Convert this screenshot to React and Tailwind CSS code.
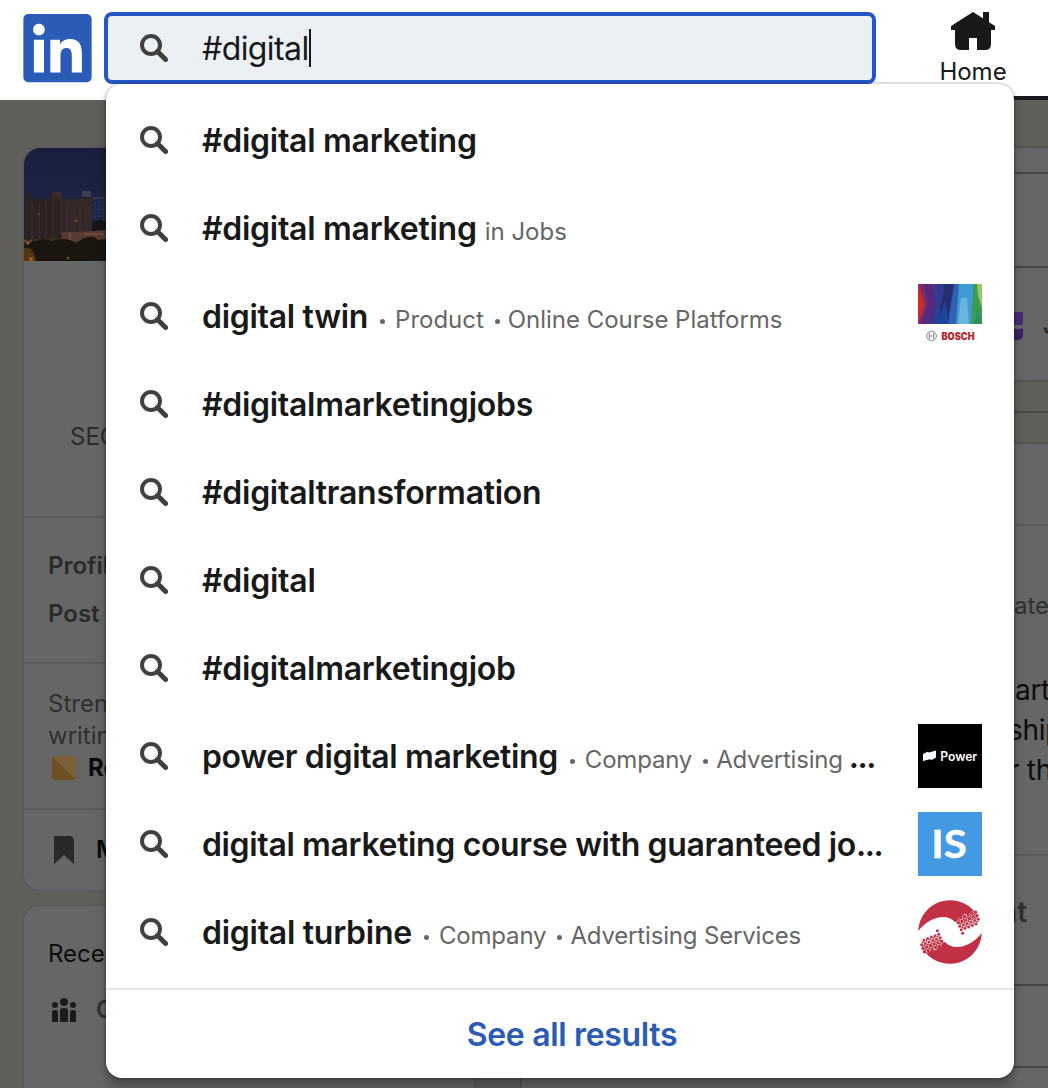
import React, { useState } from 'react'
import { FaLinkedin } from 'react-icons/fa'

const SearchIcon = () => (
  <svg className="w-7 h-7 shrink-0" viewBox="0 0 28 28" fill="none" stroke="#404040">
    <circle cx="11" cy="11" r="9" strokeWidth="4" />
    <path d="M17.5 17.5L25.6 25.6" strokeWidth="5" strokeLinecap="round" />
  </svg>
)

const HomeIcon = () => (
  <svg className="w-11 h-[38px]" viewBox="0 0 44 38" fill="#191919">
    <path d="M22 0L32 6.3V0H38V10.2L44 14V18H40V32Q40 38 34 38H26V26H18V38H10Q4 38 4 32V18H0V14Z" />
  </svg>
)

const BoschLogo = () => (
  <svg className="w-16 h-16" viewBox="0 0 64 64">
    <rect width="64" height="40" fill="#2b2a6b" />
    <path d="M0 0H18L13 40H0Z" fill="#7b2b6c" />
    <path d="M0 0L7 20L0 40Z" fill="#cf2a2a" />
    <path d="M6 0H14L19 18L12 40H3L10 20Z" fill="#542a80" />
    <path d="M16 0H28L22 24L24 40H12L18 22Z" fill="#2f3c94" />
    <path d="M25 0H37L34 20L30 40H20L28 20Z" fill="#26306f" />
    <path d="M20 40L27 16L31 40Z" fill="#17479e" />
    <path d="M36 0H42V40H30Z" fill="#2f62b5" />
    <path d="M41 0H56L54 40H38Z" fill="#3f9bd3" />
    <path d="M40 40L43 14H49L51 40Z" fill="#6cb4dc" />
    <path d="M56 0H64V40H53Z" fill="#3a9d50" />
    <path d="M59 0H64V24L60 12Z" fill="#9dc464" />
    <path d="M56 40L60 24L64 40Z" fill="#2f8f5a" />
    <g fill="none" stroke="#8b9095">
      <circle cx="13.5" cy="52" r="4.9" strokeWidth="1" />
      <path d="M11.3 48.5V55.5M15.7 48.5V55.5M11.3 52H15.7" strokeWidth="1.2" />
    </g>
    <text x="23.5" y="55.7" textLength="33" lengthAdjust="spacingAndGlyphs" className="font-['Inter',sans-serif] font-black text-[10px]" fill="#b8242b">BOSCH</text>
  </svg>
)

const PowerLogo = () => (
  <svg className="w-16 h-16" viewBox="0 0 64 64">
    <rect width="64" height="64" fill="#000" />
    <path d="M5 30L9.5 27.8L11 28.6L18 26.6V33.6L13.5 36L12 35.2L5 37Z" fill="#fff" />
    <text x="22.2" y="36.6" textLength="37" lengthAdjust="spacingAndGlyphs" className="font-['Inter',sans-serif] font-semibold text-[12.5px]" fill="#fff">Power</text>
  </svg>
)

const InternshalaLogo = () => (
  <svg className="w-16 h-16" viewBox="0 0 64 64">
    <rect width="64" height="64" fill="#4499e3" />
    <text x="13.2" y="45.6" textLength="35.6" lengthAdjust="spacingAndGlyphs" className="font-['Lato',sans-serif] font-bold text-[38.5px]" fill="#fff" stroke="#fff" strokeWidth="0.4">IS</text>
  </svg>
)

// halftone corner, the other one is the same turned by 180deg
const dots = []
for (let r = 0; r < 5; r++) {
  for (let c = 0; c < 6; c++) {
    const x = 39 + c * 3.7 + r * 1.4
    const y = 19.2 - c * 1.4 + r * 3.5
    if (x > 63 || (r === 3 && c > 4) || (r === 4 && (c < 0 || c > 0))) continue
    dots.push([x, y, r < 2 ? 1.75 : 1.5])
    if (r < 3 && c < 5) dots.push([x + 2.6, y + 1.1, 1])
  }
}

const TurbineHalf = () => (
  <>
    <path d="M0.2 31A32 32 0 0 1 57 12L54 11.5L50 14.5L46 14L43 17.5L39.5 18L39 21.5L37 22C29 13 12 16 0.2 31Z" fill="#c13044" />
    {dots.map(([x, y, r], i) => <circle key={i} cx={x} cy={y} r={r} fill="#c13044" />)}
  </>
)

const TurbineLogo = () => (
  <svg className="w-16 h-16" viewBox="0 0 64 64">
    <TurbineHalf />
    <g transform="rotate(180 32 32)">
      <TurbineHalf />
    </g>
  </svg>
)

const CityPhoto = () => (
  <svg className="block w-[450px] h-[113px]" viewBox="0 0 450 113">
    <defs>
      <linearGradient id="sky" x1="0" y1="0" x2="0" y2="1">
        <stop offset="0" stopColor="#191f3d" />
        <stop offset="1" stopColor="#20284e" />
      </linearGradient>
    </defs>
    <rect width="450" height="113" fill="url(#sky)" />
    <path d="M2 51V45H8V51H24V46H28V44H38V51H58V43H67V51H82V113H0V51Z" fill="#292126" />
    <rect x="58" y="43" width="9" height="6" fill="#3a3f56" />
    <rect x="28" y="44" width="10" height="7" fill="#382a2d" />
    <rect x="2" y="51" width="34" height="44" fill="#2d2222" />
    <rect x="36" y="51" width="32" height="36" fill="#35272a" />
    <rect x="68" y="51" width="14" height="24" fill="#1e2646" />
    <path d="M8 53V92M15 53V92M22 53V92M29 53V92M43 53V84M50 53V84M56 53V84M62 53V84" stroke="#3b2b29" strokeWidth="1.5" />
    <path d="M68 50H82" stroke="#4d4a4c" strokeWidth="1" />
    <path d="M71 54V72M75 53V72M79 53V72" stroke="#2a345a" strokeWidth="2" strokeDasharray="2 1.5" />
    <path d="M68 76Q74 68 82 74V86H68Z" fill="#15141b" />
    <path d="M38 84H54L70 83L82 82V96H36Z" fill="#573a31" />
    <path d="M46 84V95M60 86H80" stroke="#7a5040" strokeWidth="1.5" />
    <path d="M0 93H36" stroke="#634423" strokeWidth="3" strokeDasharray="3 2" />
    <path d="M0 113V98Q16 88 28 93Q42 88 52 95Q66 84 74 92L82 91V113Z" fill="#19160f" />
    <path d="M0 100Q10 98 12 113H0Z" fill="#543411" />
    <circle cx="7" cy="111" r="2" fill="#a0601b" />
    <circle cx="4" cy="95" r="1.5" fill="#9a7140" />
    <circle cx="52" cy="73" r="1" fill="#916539" />
    <circle cx="15" cy="66" r="1" fill="#6d4c37" />
    <circle cx="44" cy="110" r="1.5" fill="#7a3f14" />
  </svg>
)

const results = [
  { title: '#digital marketing', track: 'tracking-[-0.28px]' },
  { title: '#digital marketing', track: 'tracking-[-0.28px]', suffix: 'in Jobs' },
  { title: 'digital twin', track: 'tracking-[-0.3px]', meta: ['Product', 'Online Course Platforms'], metaTrack: 'tracking-[-0.02px]', logo: <BoschLogo /> },
  { title: '#digitalmarketingjobs', track: 'tracking-[-0.3px]' },
  { title: '#digitaltransformation', track: 'tracking-[-0.27px]' },
  { title: '#digital', track: 'tracking-[-0.25px]' },
  { title: '#digitalmarketingjob', track: 'tracking-[-0.3px]' },
  { title: 'power digital marketing', track: 'tracking-[-0.36px]', meta: ['Company', 'Advertising'], metaTrack: 'tracking-[-0.2px]', more: true, logo: <PowerLogo /> },
  { title: 'digital marketing course with guaranteed jo', track: 'tracking-[-0.36px]', cut: true, logo: <InternshalaLogo /> },
  { title: 'digital turbine', track: 'tracking-[-0.27px]', meta: ['Company', 'Advertising Services'], metaTrack: 'tracking-[-0.17px]', logo: <TurbineLogo /> },
]

const ResultRow = ({ item }) => (
  <li className="flex items-center h-22 pl-[34px] pr-8 cursor-pointer">
    <SearchIcon />
    <div className="flex-1 flex items-baseline ml-[34px] pt-0.5 whitespace-nowrap">
      <span className={`text-[32px] leading-10 font-semibold text-[#191919] ${item.track}`}>
        {item.title}
        {item.cut && <span className="tracking-[-1.4px]">...</span>}
      </span>
      {item.suffix && <span className="ml-2 text-2xl text-[#666]">{item.suffix}</span>}
      {item.meta && item.meta.map((m, i) => (
        <span key={m} className={`flex items-baseline text-2xl text-[#666] ${item.metaTrack}`}>
          <span className={`w-[5px] h-[5px] relative top-px self-center rounded-full bg-[#666] ${i === 0 ? 'ml-3 mr-2.5' : 'ml-[11px] mr-2'}`}></span>
          {m}
        </span>
      ))}
      {item.more && <span className="ml-1.5 text-[32px] leading-10 font-semibold tracking-[-1.4px] text-[#191919]">...</span>}
    </div>
    {item.logo}
  </li>
)

const Header = ({ query }) => (
  <header className="flex items-start h-25 bg-white pl-[23px] pt-3">
    <FaLinkedin className="w-[69px] h-[78px] shrink-0 -mt-[3px] text-[#2a5bb7]" />
    <label className="flex items-center w-[772px] h-18 shrink-0 ml-3 pl-8 rounded-lg border-4 border-[#2655c4] bg-[#ebf0f5]">
      <SearchIcon />
      <span className="ml-[34px] pt-0.5 text-[32px] text-[#191919] tracking-[-0.6px]">{query}</span>
      <span className="w-0.5 h-[38px] bg-[#191919]"></span>
    </label>
    <nav className="flex flex-col items-center w-[194px] shrink-0">
      <HomeIcon />
      <span className="mt-1.5 text-2xl leading-8 text-[#191919]">Home</span>
    </nav>
  </header>
)

const LeftColumn = () => (
  <aside className="w-[454px] shrink-0 pt-[46px] text-2xl whitespace-nowrap">
    <div className="border-2 border-[#5b5b5b] rounded-[18px] overflow-hidden bg-[#666]">
      <CityPhoto />
      <div className="h-[255px] pt-[160px] pl-[46px] text-[#2b2b2b]">SEO</div>
      <div className="h-[146px] border-t-2 border-[#5a5a5a] pt-6 pl-6 font-semibold text-[#2b2b2b]">
        <p className="leading-12">Profile</p>
        <p className="leading-12">Post</p>
      </div>
      <div className="h-[146px] border-t-2 border-[#5a5a5a] pt-6 pl-6 text-[#303030]">
        <p className="leading-8">Strengthen</p>
        <p className="leading-8">writing</p>
        <div className="flex items-center gap-3 pl-1 leading-8">
          <svg className="w-6 h-6" viewBox="0 0 24 24">
            <rect width="24" height="24" rx="4" fill="#6f5022" />
            <path d="M2 2L22 22Q24 21 24 19V4Q24 0 20 0H4Q2 0 2 2Z" fill="#7c6138" />
          </svg>
          <span className="font-bold text-[#0a0a0a]">Re</span>
        </div>
      </div>
      <div className="flex items-center h-[82px] border-t-2 border-[#5a5a5a] pl-[30px]">
        <svg className="w-5 h-7" viewBox="0 0 20 28" fill="#292929">
          <path d="M0 0H15Q20 0 20 5V28L10 19L0 28Z" />
        </svg>
        <span className="ml-[22px] font-semibold text-[#0a0a0a]">My</span>
      </div>
    </div>
    <div className="h-[300px] mt-3 border-2 border-[#5b5b5b] rounded-[18px] bg-[#666] pt-8 pl-6">
      <p className="leading-8 text-[#0d0d0d]">Recent</p>
      <div className="flex items-center mt-6 pl-1">
        <svg className="w-6 h-6" viewBox="0 0 24 24" fill="#1b1b1b">
          <circle cx="3" cy="7" r="3" />
          <circle cx="12" cy="4" r="4" />
          <circle cx="21" cy="7" r="3" />
          <path d="M0 24V14Q0 12 2 12H4Q6 12 6 14V24ZM8 24V13Q8 10 11 10H13Q16 10 16 13V24ZM18 24V14Q18 12 20 12H22Q24 12 24 14V24Z" />
        </svg>
        <span className="ml-5 font-semibold text-[#303030]">Gr</span>
      </div>
    </div>
  </aside>
)

const Feed = () => (
  <main className="w-[560px] shrink-0 ml-11 pt-[46px] whitespace-nowrap">
    <div className="h-[236px] border-y-2 border-[#565554] bg-[#666] pt-6">
      <div className="h-24 border-y-2 border-[#474747]"></div>
      <div className="flex items-center h-[112px] pl-[480px] pt-1">
        <svg className="w-[23px] h-7 shrink-0" viewBox="0 0 23 28">
          <path d="M0 0H23V11Q23 13 20 13H0Z" fill="#482c75" />
          <path d="M0 17H20Q23 17 23 14V22Q23 28 17 28H0Z" fill="#3d2068" />
        </svg>
        <span className="ml-5 text-2xl font-semibold text-[#2b2b2b]">J</span>
      </div>
    </div>
    <div className="h-[60px] flex items-center">
      <div className="w-full h-0.5 bg-[#4a4947]"></div>
    </div>
    <div className="h-[700px] border-2 border-[#565554] bg-[#666]">
      <div className="h-20"></div>
      <div className="h-[330px] border-t-2 border-[#5a5a5a] pt-16">
        <p className="pl-[492px] text-2xl leading-8 text-[#303030]">ate</p>
        <div className="mt-12 text-[28px] leading-10 tracking-[-0.3px] text-[#0d0d0d]">
          <p className="pl-[493px]">art</p>
          <p className="pl-[486px]">ship</p>
          <p className="pl-[487px]">r th</p>
        </div>
      </div>
      <div className="h-[130px] border-t-2 border-[#5a5a5a] pt-[38px] pl-[478px] text-[28px] font-semibold leading-9 text-[#303030]">nt</div>
      <div className="h-[84px] border-y-2 border-[#474747]"></div>
    </div>
  </main>
)

const App = () => {
  const [query] = useState('#digital')

  return (
    <div className="relative w-[1048px] h-[1088px] overflow-hidden bg-[#615f5c] font-['Inter',sans-serif]">
      <Header query={query} />
      <div className="flex pl-[22px]">
        <LeftColumn />
        <Feed />
      </div>

      {/* active nav underline */}
      <div className="absolute top-24 right-0 w-[60px] h-1 bg-[#191919]"></div>

      {/* typeahead */}
      <div className="absolute left-[106px] top-[84px] w-[908px] h-[994px] rounded-2xl bg-white shadow-[0_0_0_2px_rgba(0,0,0,0.1),0_8px_12px_rgba(0,0,0,0.3)]">
        <ul className="py-3">
          {results.map((item, i) => (
            <ResultRow key={i} item={item} />
          ))}
        </ul>
        <button className="flex items-center justify-center w-full h-[90px] border-t-2 border-[#e5e5e5] pl-6 pt-0.5 text-[32px] font-semibold tracking-[-0.33px] text-[#2a5bb7]">See all results</button>
      </div>
    </div>
  )
}

export default App
